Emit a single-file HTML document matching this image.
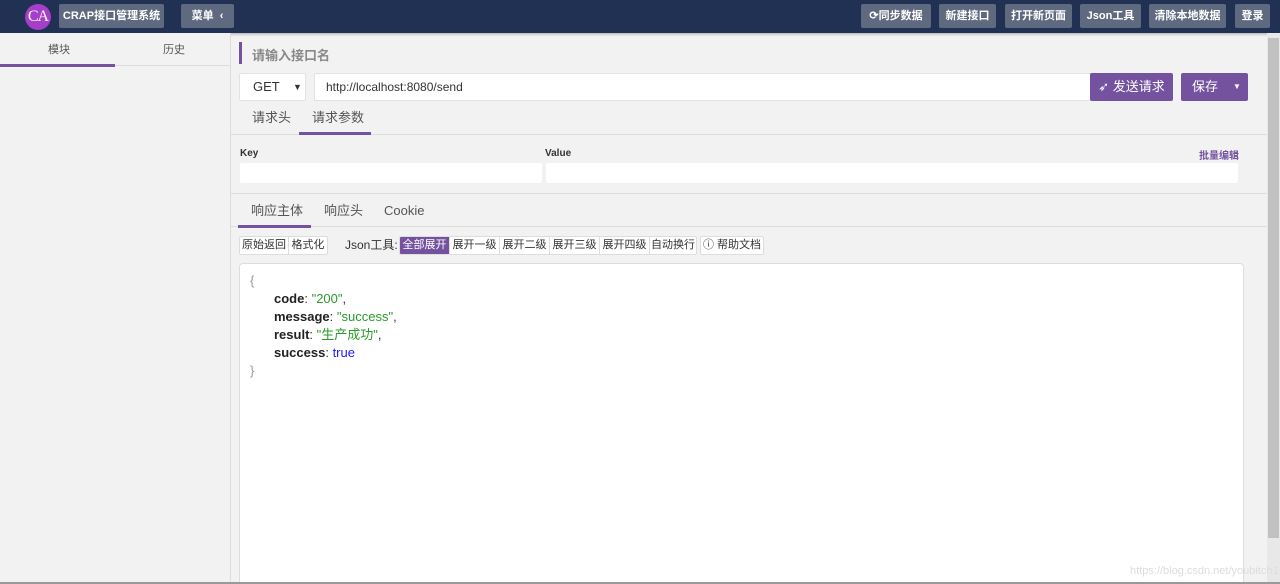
<!DOCTYPE html>
<html><head><meta charset="utf-8"><style>
*{box-sizing:border-box;margin:0;padding:0}
html,body{width:1280px;height:584px;overflow:hidden}
body{background:#f2f2f2;font-family:"Liberation Sans","Noto Sans CJK SC",sans-serif;font-size:12px;color:#333;position:relative}
.top{position:absolute;left:0;top:0;width:1280px;height:33px;background:#213154;box-shadow:0 1px 3px rgba(0,0,0,.3)}
.logo{position:absolute;left:25px;top:4px;width:26px;height:26px;border-radius:50%;background:#a53ec9;color:#fff;font-family:"Liberation Serif",serif;font-size:16px;text-align:center;line-height:26px;letter-spacing:-1px}
.tb{position:absolute;top:4px;height:24px;background:#5f6a80;color:#fff;font-weight:bold;font-size:11px;line-height:24px;text-align:center;border-radius:2px}
.side{position:absolute;left:0;top:33px;width:231px;height:551px;border-right:1px solid #ddd;background:#f2f2f2}
.abs{position:absolute}
.purple{background:#7452a0}
.tab{position:absolute;font-size:13px;color:#555;line-height:16px;height:16px}
.btn{position:absolute;top:236px;height:19px;border:1px solid #ddd;background:#fff;font-size:11px;line-height:17px;color:#333;display:flex;border-radius:2px;overflow:hidden}
.btn span{display:block;text-align:center;border-right:1px solid #ddd;height:17px;white-space:nowrap;overflow:hidden}
.code{position:absolute;left:239px;top:263px;width:1005px;height:330px;background:#fff;border:1px solid #ddd;border-radius:4px;font-size:13px;line-height:18px}
.k{font-weight:bold;color:#222}.s{color:#2a9a2a}.b{color:#1a1aff}
</style></head><body>
<div class="top">
<div class="logo">CA</div>
<div class="tb" style="left:59px;width:105px">CRAP接口管理系统</div>
<div class="tb" style="left:181px;width:53px">菜单 &nbsp;‹</div>
<div class="tb" style="left:861px;width:70px">⟳同步数据</div>
<div class="tb" style="left:939px;width:57px">新建接口</div>
<div class="tb" style="left:1005px;width:67px">打开新页面</div>
<div class="tb" style="left:1080px;width:61px">Json工具</div>
<div class="tb" style="left:1149px;width:77px">清除本地数据</div>
<div class="tb" style="left:1235px;width:35px">登录</div>
</div>
<div class="side">
<div class="tab" style="left:48px;top:9px;font-size:11px">模块</div>
<div class="tab" style="left:163px;top:9px;font-size:11px">历史</div>
<div class="abs" style="left:0;top:32px;width:230px;height:1px;background:#ddd"></div>
<div class="abs purple" style="left:0;top:31px;width:115px;height:3px"></div>
</div>
<div class="abs" style="left:1267px;top:33px;width:13px;height:549px;background:#e8e8e8"></div>
<div class="abs" style="left:1268px;top:38px;width:11px;height:500px;background:#c1c1c1"></div>
<div class="abs purple" style="left:239px;top:42px;width:3px;height:22px"></div>
<div class="abs" style="left:252px;top:45px;font-size:13px;color:#888;font-weight:bold">请输入接口名</div>
<div class="abs" style="left:239px;top:73px;width:67px;height:28px;background:#fff;border:1px solid #e2e2e2;border-radius:2px;font-size:13px;line-height:26px;padding-left:13px">GET<span style="position:absolute;left:53px;font-size:9px">▼</span></div>
<div class="abs" style="left:314px;top:73px;width:778px;height:28px;background:#fff;border:1px solid #e2e2e2;font-size:12px;line-height:26px;padding-left:11px">http://localhost:8080/send</div>
<div class="abs purple" style="left:1090px;top:73px;width:83px;height:28px;border-radius:2px;color:#fff;font-size:13px;line-height:28px;text-align:center">➶ 发送请求</div>
<div class="abs purple" style="left:1181px;top:73px;width:67px;height:28px;border-radius:2px;color:#fff;font-size:13px;line-height:28px;padding-left:11px">保存<span style="position:absolute;left:52px;font-size:8px">▼</span></div>
<div class="tab" style="left:252px;top:110px">请求头</div>
<div class="tab" style="left:312px;top:110px">请求参数</div>
<div class="abs" style="left:231px;top:134px;width:1036px;height:1px;background:#ddd"></div>
<div class="abs purple" style="left:299px;top:132px;width:72px;height:3px"></div>
<div class="abs" style="left:240px;top:148px;font-size:10px;font-weight:bold">Key</div>
<div class="abs" style="left:545px;top:148px;font-size:10px;font-weight:bold">Value</div>
<div class="abs" style="left:1199px;top:147px;font-size:10px;font-weight:bold;color:#7452a0">批量编辑</div>
<div class="abs" style="left:240px;top:163px;width:302px;height:20px;background:#fff;border-radius:2px"></div>
<div class="abs" style="left:546px;top:163px;width:692px;height:20px;background:#fff;border-radius:2px"></div>
<div class="abs" style="left:231px;top:193px;width:1036px;height:1px;background:#ddd"></div>
<div class="tab" style="left:251px;top:203px">响应主体</div>
<div class="tab" style="left:324px;top:203px">响应头</div>
<div class="tab" style="left:384px;top:203px">Cookie</div>
<div class="abs" style="left:231px;top:226px;width:1036px;height:1px;background:#ddd"></div>
<div class="abs purple" style="left:238px;top:225px;width:73px;height:3px"></div>
<div class="btn" style="left:239px;width:89px"><span style="width:49px">原始返回</span><span style="width:38px;border:0">格式化</span></div>
<div class="abs" style="left:345px;top:237px;font-size:12px;line-height:16px">Json工具:</div>
<div class="btn" style="left:399px;width:298px"><span style="width:50px;background:#7452a0;color:#fff">全部展开</span><span style="width:50px">展开一级</span><span style="width:50px">展开二级</span><span style="width:50px">展开三级</span><span style="width:50px">展开四级</span><span style="width:46px;border:0">自动换行</span></div>
<div class="btn" style="left:700px;width:64px"><span style="width:62px;border:0">ⓘ 帮助文档</span></div>
<div class="code">
<div style="position:absolute;left:10px;top:8px;color:#999">{</div>
<div style="position:absolute;left:34px;top:26px"><span class="k">code</span>: <span class="s">"200"</span>,<br><span class="k">message</span>: <span class="s">"success"</span>,<br><span class="k">result</span>: <span class="s">"生产成功"</span>,<br><span class="k">success</span>: <span class="b">true</span></div>
<div style="position:absolute;left:10px;top:98px;color:#999">}</div>
</div>
<div class="abs" style="left:1130px;top:565px;font-size:11px;color:#ddd">https://blog.csdn.net/youbitch1</div>
<div class="abs" style="left:0;top:582px;width:1280px;height:2px;background:#999"></div>
</body></html>
